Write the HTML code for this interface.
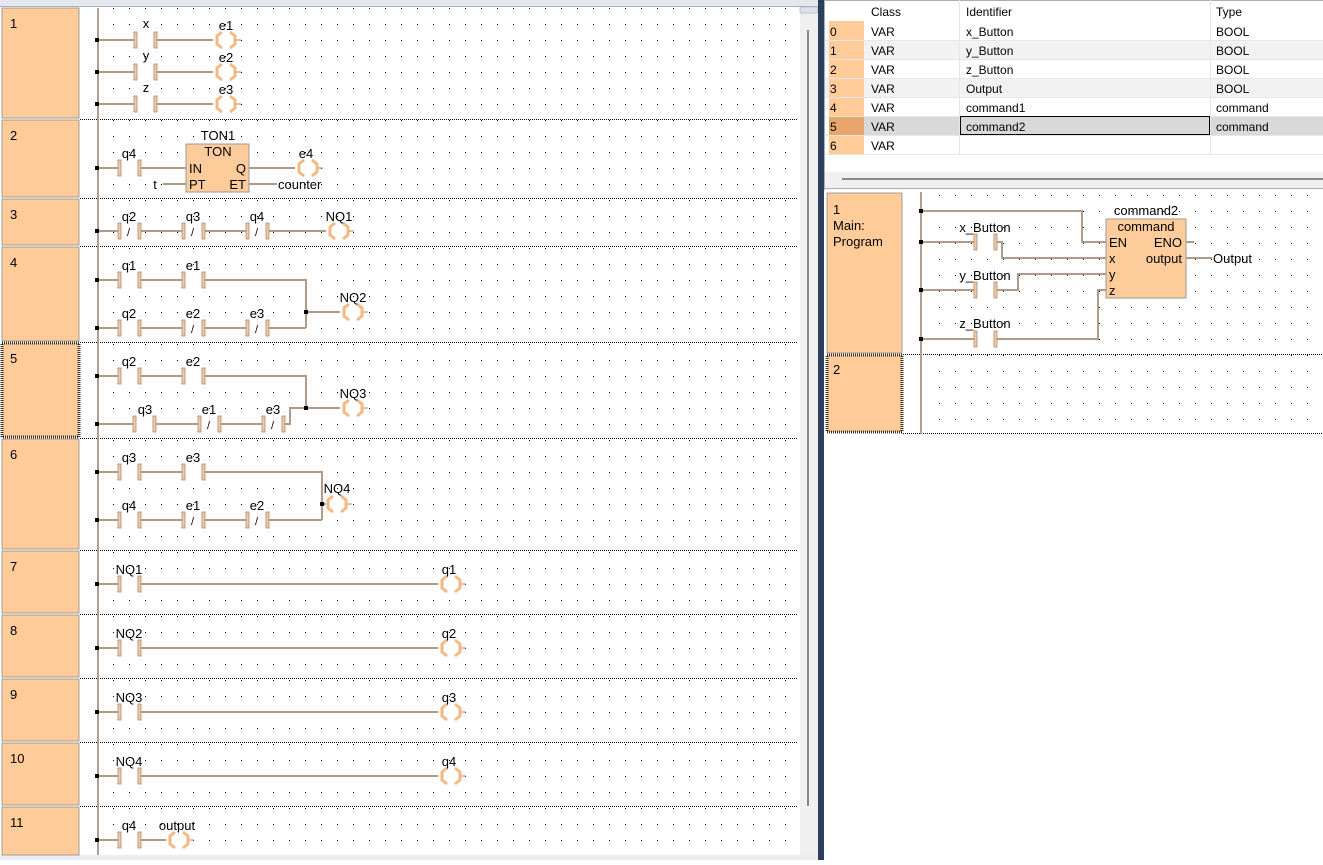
<!DOCTYPE html>
<html><head><meta charset="utf-8"><style>
body{margin:0;width:1323px;height:860px;overflow:hidden;background:#fff;font-family:"Liberation Sans",Arial,sans-serif}
svg text{font-family:"Liberation Sans",Arial,sans-serif;font-size:13px;fill:#000}
svg .t text{font-size:12px}
</style></head><body>
<svg width="1323" height="860" viewBox="0 0 1323 860" xmlns="http://www.w3.org/2000/svg">
<defs>
<pattern id="dl" x="113" y="8" width="16" height="16" patternUnits="userSpaceOnUse"><rect x="0" y="0" width="1" height="1" fill="#000"/></pattern>
<pattern id="dr" x="939" y="3" width="16" height="16" patternUnits="userSpaceOnUse"><rect x="0" y="0" width="1" height="1" fill="#000"/></pattern>
<g id="no"><rect x="2" y="-8" width="19" height="16" fill="#fff"/><rect x="0" y="-8" width="3" height="16" fill="#fcc898" stroke="#9c8e82" stroke-width="0.8"/><rect x="20" y="-8" width="3" height="16" fill="#fcc898" stroke="#9c8e82" stroke-width="0.8"/></g>
<g id="nc"><use href="#no"/><text x="9" y="5" style="font-size:11px">/</text></g>
<g id="coil" fill="none"><rect x="3" y="-8" width="20" height="16" fill="#fff"/><path d="M9 -8 L4 -4 L4 4 L9 8 M17 -8 L22 -4 L22 4 L17 8" stroke="#f3b985" stroke-width="3"/><path d="M23 0 H28" stroke="#9c8e82" stroke-width="1"/></g>
</defs>
<rect x="0" y="0" width="818" height="7" fill="#e4e7ee"/>
<rect x="0" y="6" width="818" height="1" fill="#aab0bf"/>
<rect x="0" y="855" width="818" height="5" fill="#eceef2"/>
<rect x="99" y="8" width="700" height="847" fill="url(#dl)"/>
<rect x="800" y="7" width="18" height="848" fill="#f0f0f0"/>
<rect x="800" y="7" width="18" height="6" fill="#dde1e9" stroke="#aab0bf" stroke-width="0.7"/>
<rect x="807" y="30" width="2" height="776" fill="#888"/>
<rect x="818" y="0" width="6" height="860" fill="#2d3d5c"/>
<g fill="#ffcc99" stroke="#8a8a8a" stroke-width="0.8">
<rect x="2" y="8" width="77" height="110"/><rect x="2" y="120" width="77" height="77"/><rect x="2" y="199" width="77" height="46"/><rect x="2" y="247" width="77" height="94"/><rect x="2" y="343" width="77" height="94" stroke="#333" stroke-width="3" stroke-dasharray="1 1"/><rect x="2" y="439" width="77" height="110"/><rect x="2" y="551" width="77" height="62"/><rect x="2" y="615" width="77" height="62"/><rect x="2" y="679" width="77" height="62"/><rect x="2" y="743" width="77" height="62"/><rect x="2" y="807" width="77" height="48"/>
</g>
<g><text x="10" y="28">1</text><text x="10" y="140">2</text><text x="10" y="219">3</text><text x="10" y="267">4</text><text x="10" y="363">5</text><text x="10" y="459">6</text><text x="10" y="571">7</text><text x="10" y="635">8</text><text x="10" y="699">9</text><text x="10" y="763">10</text><text x="10" y="827">11</text></g>
<g stroke="#000" stroke-width="1" stroke-dasharray="1 1">
<path d="M80 119.5H798M80 198.5H798M80 246.5H798M80 342.5H798M80 438.5H798M80 550.5H798M80 614.5H798M80 678.5H798M80 742.5H798M80 806.5H798"/>
</g>
<rect x="97" y="8" width="2" height="847" fill="#b0a090"/>
<g fill="none" stroke="#b09a88" stroke-width="2">
<path d="M97 40H134M157 40H213M97 72H134M157 72H213M97 104H134M157 104H213"/>
<path d="M97 168H118M141 168H186M163 184H186M249 168H295M249 184H277"/>
<path d="M97 231H118M141 231H182M205 231H246M269 231H326"/>
<path d="M97 280H118M141 280H182M205 280H306V328M97 328H118M141 328H182M205 328H246M269 328H306M306 312H340"/>
<path d="M97 376H118M141 376H182M205 376H306V408M97 424H133M156 424H198M221 424H262M285 424H290V408H340"/>
<path d="M97 472H118M141 472H182M205 472H322V520M97 520H118M141 520H182M205 520H246M269 520H322M322 504H326"/>
<path d="M97 584H118M141 584H438M97 648H118M141 648H438M97 712H118M141 712H438M97 776H118M141 776H438M97 840H118M141 840H166"/>
</g>
<g fill="#000"><rect x="95" y="38" width="4" height="4"/><rect x="95" y="70" width="4" height="4"/><rect x="95" y="102" width="4" height="4"/><rect x="95" y="166" width="4" height="4"/><rect x="95" y="229" width="4" height="4"/><rect x="95" y="278" width="4" height="4"/><rect x="95" y="326" width="4" height="4"/><rect x="95" y="374" width="4" height="4"/><rect x="95" y="422" width="4" height="4"/><rect x="95" y="470" width="4" height="4"/><rect x="95" y="518" width="4" height="4"/><rect x="95" y="582" width="4" height="4"/><rect x="95" y="646" width="4" height="4"/><rect x="95" y="710" width="4" height="4"/><rect x="95" y="774" width="4" height="4"/><rect x="95" y="838" width="4" height="4"/><rect x="304" y="310" width="4" height="4"/><rect x="304" y="406" width="4" height="4"/><rect x="320" y="502" width="4" height="4"/></g>
<use href="#no" x="134" y="40"/><use href="#no" x="134" y="72"/><use href="#no" x="134" y="104"/>
<use href="#coil" x="213" y="40"/><use href="#coil" x="213" y="72"/><use href="#coil" x="213" y="104"/>
<use href="#no" x="118" y="168"/><use href="#coil" x="295" y="168"/>
<rect x="186" y="144" width="63" height="48" fill="#fecb9a" stroke="#999" stroke-width="1"/>
<use href="#nc" x="118" y="231"/><use href="#nc" x="182" y="231"/><use href="#nc" x="246" y="231"/><use href="#coil" x="326" y="231"/>
<use href="#no" x="118" y="280"/><use href="#no" x="182" y="280"/><use href="#no" x="118" y="328"/><use href="#nc" x="182" y="328"/><use href="#nc" x="246" y="328"/><use href="#coil" x="340" y="312"/>
<use href="#no" x="118" y="376"/><use href="#no" x="182" y="376"/><use href="#no" x="133" y="424"/><use href="#nc" x="198" y="424"/><use href="#nc" x="262" y="424"/><use href="#coil" x="340" y="408"/>
<use href="#no" x="118" y="472"/><use href="#no" x="182" y="472"/><use href="#no" x="118" y="520"/><use href="#nc" x="182" y="520"/><use href="#nc" x="246" y="520"/><use href="#coil" x="324" y="504"/>
<use href="#no" x="118" y="584"/><use href="#coil" x="438" y="584"/><use href="#no" x="118" y="648"/><use href="#coil" x="438" y="648"/><use href="#no" x="118" y="712"/><use href="#coil" x="438" y="712"/><use href="#no" x="118" y="776"/><use href="#coil" x="438" y="776"/>
<use href="#no" x="118" y="840"/><use href="#coil" x="166" y="840"/>
<g text-anchor="middle">
<text x="146" y="28">x</text><text x="226" y="30">e1</text><text x="146" y="60">y</text><text x="226" y="62">e2</text><text x="146" y="92">z</text><text x="226" y="94">e3</text>
<text x="129" y="158">q4</text><text x="218" y="140">TON1</text><text x="218" y="156">TON</text><text x="306" y="158">e4</text><text x="155" y="189">t</text>
<text x="129" y="221">q2</text><text x="193" y="221">q3</text><text x="257" y="221">q4</text><text x="339" y="221">NQ1</text>
<text x="129" y="270">q1</text><text x="193" y="270">e1</text><text x="129" y="318">q2</text><text x="193" y="318">e2</text><text x="257" y="318">e3</text><text x="353" y="302">NQ2</text>
<text x="129" y="366">q2</text><text x="193" y="366">e2</text><text x="145" y="414">q3</text><text x="209" y="414">e1</text><text x="273" y="414">e3</text><text x="353" y="398">NQ3</text>
<text x="129" y="462">q3</text><text x="193" y="462">e3</text><text x="129" y="510">q4</text><text x="193" y="510">e1</text><text x="257" y="510">e2</text><text x="337" y="493">NQ4</text>
<text x="129" y="574">NQ1</text><text x="449" y="574">q1</text><text x="129" y="638">NQ2</text><text x="449" y="638">q2</text><text x="129" y="702">NQ3</text><text x="449" y="702">q3</text><text x="129" y="766">NQ4</text><text x="449" y="766">q4</text>
<text x="129" y="830">q4</text><text x="177" y="830">output</text>
</g>
<text x="189" y="173">IN</text><text x="246" y="173" text-anchor="end">Q</text><text x="189" y="189">PT</text><text x="246" y="189" text-anchor="end">ET</text><text x="278" y="189">counter</text>
<rect x="824" y="0" width="499" height="860" fill="#fff"/>
<rect x="824" y="0" width="1" height="190" fill="#a8aebb"/>
<rect x="824" y="0" width="499" height="1" fill="#a8aebb"/>
<g>
<rect x="825" y="40" width="498" height="19" fill="#f2f2f2"/><rect x="825" y="78" width="498" height="19" fill="#f2f2f2"/>
<rect x="864" y="116" width="459" height="19" fill="#d9d9d9"/>
<rect x="829" y="21" width="35" height="133" fill="#ffcc99"/><rect x="829" y="116" width="35" height="19" fill="#e8a66c"/>
<g fill="#e6e6e6"><rect x="825" y="40" width="498" height="1"/><rect x="825" y="59" width="498" height="1"/><rect x="825" y="78" width="498" height="1"/><rect x="825" y="97" width="498" height="1"/><rect x="825" y="116" width="498" height="1"/><rect x="825" y="135" width="498" height="1"/><rect x="825" y="154" width="498" height="1"/><rect x="959" y="0" width="1" height="155"/><rect x="1210" y="0" width="1" height="155"/></g>
<rect x="960.5" y="116.5" width="249" height="18" fill="none" stroke="#000"/>
</g>
<g class="t">
<text x="871" y="16">Class</text><text x="966" y="16">Identifier</text><text x="1216" y="16">Type</text>
<text x="830" y="36">0</text><text x="871" y="36">VAR</text><text x="966" y="36">x_Button</text><text x="1216" y="36">BOOL</text>
<text x="830" y="55">1</text><text x="871" y="55">VAR</text><text x="966" y="55">y_Button</text><text x="1216" y="55">BOOL</text>
<text x="830" y="74">2</text><text x="871" y="74">VAR</text><text x="966" y="74">z_Button</text><text x="1216" y="74">BOOL</text>
<text x="830" y="93">3</text><text x="871" y="93">VAR</text><text x="966" y="93">Output</text><text x="1216" y="93">BOOL</text>
<text x="830" y="112">4</text><text x="871" y="112">VAR</text><text x="966" y="112">command1</text><text x="1216" y="112">command</text>
<text x="830" y="131">5</text><text x="871" y="131">VAR</text><text x="966" y="131">command2</text><text x="1216" y="131">command</text>
<text x="830" y="150">6</text><text x="871" y="150">VAR</text>
</g>
<rect x="825" y="172" width="498" height="16" fill="#f0f0f0"/>
<rect x="842" y="178" width="481" height="2" fill="#888"/>
<rect x="824" y="188" width="499" height="1" fill="#a8aebb"/>
<rect x="924" y="194" width="399" height="240" fill="url(#dr)"/>
<rect x="827" y="193" width="75" height="160" fill="#ffcc99" stroke="#8a8a8a" stroke-width="0.8"/>
<rect x="827" y="355" width="75" height="77" fill="#ffcc99" stroke="#333" stroke-width="3" stroke-dasharray="1 1"/>
<text x="833" y="214">1</text><text x="833" y="230">Main:</text><text x="833" y="246">Program</text><text x="833" y="374">2</text>
<g stroke="#000" stroke-dasharray="1 1"><path d="M903 354.5H1323M903 433.5H1323"/></g>
<rect x="920" y="192" width="2" height="242" fill="#b0a090"/>
<g fill="none" stroke="#b09a88" stroke-width="2">
<path d="M921 211H1082V242H1106M921 242H974M997 242H1002V258H1106M921 290H974M997 290H1018V274H1106M921 339H974M997 339H1098V290H1106M1186 242H1194M1186 258H1212"/>
</g>
<g fill="#000"><rect x="919" y="209" width="4" height="4"/><rect x="919" y="240" width="4" height="4"/><rect x="919" y="288" width="4" height="4"/><rect x="919" y="337" width="4" height="4"/></g>
<use href="#no" x="974" y="242"/><use href="#no" x="974" y="290"/><use href="#no" x="974" y="339"/>
<rect x="1106" y="219" width="80" height="79" fill="#fecb9a" stroke="#999"/>
<text x="985" y="232" text-anchor="middle">x_Button</text><text x="985" y="280" text-anchor="middle">y_Button</text><text x="985" y="328" text-anchor="middle">z_Button</text>
<text x="1146" y="215" text-anchor="middle">command2</text><text x="1146" y="231" text-anchor="middle">command</text>
<text x="1109" y="247">EN</text><text x="1182" y="247" text-anchor="end">ENO</text><text x="1109" y="263">x</text><text x="1182" y="263" text-anchor="end">output</text><text x="1109" y="279">y</text><text x="1109" y="295">z</text>
<text x="1213" y="263">Output</text>
</svg>
</body></html>
